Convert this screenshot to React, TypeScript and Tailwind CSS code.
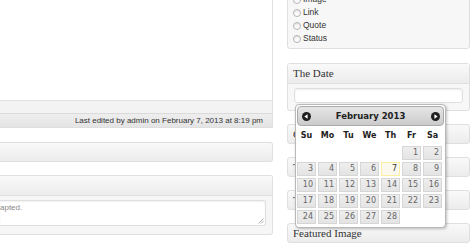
import React from "react";

const weeks: (number | null)[][] = [
  [null, null, null, null, null, 1, 2],
  [3, 4, 5, 6, 7, 8, 9],
  [10, 11, 12, 13, 14, 15, 16],
  [17, 18, 19, 20, 21, 22, 23],
  [24, 25, 26, 27, 28, null, null],
];

const dayNames = ["Su", "Mo", "Tu", "We", "Th", "Fr", "Sa"];

function CircleArrow({ dir }: { dir: "left" | "right" }) {
  return (
    <svg width="9" height="9" viewBox="0 0 9 9">
      <circle cx="4.5" cy="4.5" r="4.5" fill="#1f1f1f" />
      {dir === "left" ? (
        <polygon points="2.3,4.5 5.6,2.2 5.6,6.8" fill="#fff" />
      ) : (
        <polygon points="6.7,4.5 3.4,2.2 3.4,6.8" fill="#fff" />
      )}
    </svg>
  );
}

function Radio({ label }: { label: string }) {
  return (
    <div className="h-[13px] flex items-center gap-[2px]">
      <span className="w-[8px] h-[8px] rounded-full border border-[#b4b4b4] bg-linear-to-b from-[#f2f2f2] to-white shadow-[inset_0_1px_1px_rgba(0,0,0,0.08)]" />
      <span className="text-[8.5px] leading-none text-[#333]">{label}</span>
    </div>
  );
}

function CollapsedBox({ title }: { title: string }) {
  return (
    <div className="mt-[13px] h-[20px] border border-[#dfdfdf] rounded-[3px] bg-linear-to-b from-[#f9f9f9] to-[#ececec] flex items-center pl-[5px] font-['Liberation_Serif',Georgia,serif] text-[11px] text-[#333]">
      {title}
    </div>
  );
}

export default function App() {
  return (
    <div className="relative w-[474px] h-[248px] overflow-hidden bg-white flex font-['Liberation_Sans',Arial,sans-serif]">
      {/* left column */}
      <div className="w-[273px] shrink-0 flex flex-col">
        <div className="border-r border-b border-[#dfdfdf] flex flex-col">
          <div className="h-[100px] bg-white" />
          <div className="h-[13px] border-t border-[#e2e2e2] bg-[#f3f3f3]" />
          <div className="h-[14px] border-t border-[#dadada] bg-linear-to-b from-[#eeeeee] to-[#e4e4e4] flex items-center justify-end pr-[9px] text-[8px] leading-none text-[#333]">
            Last edited by admin on February 7, 2013 at 8:19 pm
          </div>
        </div>

        <div className="mt-[14px] h-[20px] border-y border-r border-[#dfdfdf] rounded-r-[3px] bg-linear-to-b from-[#f9f9f9] to-[#ececec]" />

        <div className="mt-[13px] border-y border-r border-[#dfdfdf] rounded-r-[3px] bg-[#f6f6f6] flex flex-col">
          <div className="h-[20px] border-b border-[#dfdfdf] bg-linear-to-b from-[#f9f9f9] to-[#ececec]" />
          <div className="pt-[4px] pb-[8px] pr-[6px]">
            <div className="relative h-[26px] border-y border-r border-[#dfdfdf] rounded-r-[3px] bg-white shadow-[inset_0_1px_2px_rgba(0,0,0,0.06)] pt-[2px] text-[8px] leading-[10px] text-[#888]">
              apted.
              <svg
                className="absolute right-[1px] bottom-[1px]"
                width="6"
                height="6"
                viewBox="0 0 6 6"
              >
                <line x1="5.5" y1="0.5" x2="0.5" y2="5.5" stroke="#9a9a9a" strokeWidth="0.8" />
                <line x1="5.5" y1="3" x2="3" y2="5.5" stroke="#9a9a9a" strokeWidth="0.8" />
              </svg>
            </div>
          </div>
        </div>
      </div>

      {/* right column */}
      <div className="ml-[14px] w-[183px] shrink-0 flex flex-col">
        <div className="-mt-[20px] border border-[#dfdfdf] rounded-[3px] bg-[#f7f7f7] pt-[12px] pb-[3px] pl-[5px]">
          <Radio label="Image" />
          <Radio label="Link" />
          <Radio label="Quote" />
          <Radio label="Status" />
        </div>

        <div className="mt-[14px] border border-[#dfdfdf] rounded-[3px] bg-[#f7f7f7] flex flex-col">
          <div className="h-[20px] border-b border-[#dfdfdf] bg-linear-to-b from-[#f9f9f9] to-[#ececec] flex items-center pl-[5px] font-['Liberation_Serif',Georgia,serif] text-[11px] text-[#333]">
            The Date
          </div>
          <div className="pt-[4px] pb-[7px] px-[6px]">
            <div className="h-[15px] border border-[#dfdfdf] rounded-[3px] bg-white shadow-[inset_0_1px_2px_rgba(0,0,0,0.07)]" />
          </div>
        </div>

        <CollapsedBox title="Categories" />
        <CollapsedBox title="Tags" />
        <CollapsedBox title="Theme Options" />
        <CollapsedBox title="Featured Image" />
      </div>

      {/* datepicker popup */}
      <div className="absolute left-[295px] top-[104px] w-[151px] border border-[#b8b8b8] rounded-[4px] bg-white px-[1px] pt-[1px] pb-[3px] shadow-[1px_1px_3px_rgba(0,0,0,0.25)] font-['DejaVu_Sans',Verdana,sans-serif]">
        <div className="h-[20px] border border-[#aaaaaa] rounded-[4px] bg-linear-to-b from-[#e6e6e6] to-[#cbcbcb] flex items-center px-[3.5px]">
          <CircleArrow dir="left" />
          <div className="flex-1 text-center text-[8.5px] font-bold leading-none text-[#222]">
            February 2013
          </div>
          <CircleArrow dir="right" />
        </div>
        <div className="grid grid-cols-[repeat(7,19px)] gap-x-[2px] h-[20px] items-center">
          {dayNames.map((d) => (
            <div key={d} className="text-center text-[8px] font-bold leading-none text-[#222]">
              {d}
            </div>
          ))}
        </div>
        <div className="grid grid-cols-[repeat(7,19px)] gap-[2px]">
          {weeks.flat().map((n, i) =>
            n === null ? (
              <div key={i} className="h-[14px]" />
            ) : n === 7 ? (
              <div
                key={i}
                className="h-[14px] border border-[#fcefa1] bg-[#fbf9ee] flex items-center justify-end pr-[2px] text-[8px] leading-none text-[#363636]"
              >
                {n}
              </div>
            ) : (
              <div
                key={i}
                className="h-[14px] border border-[#d6d6d6] bg-linear-to-b from-[#eeeeee] to-[#e4e4e4] flex items-center justify-end pr-[2px] text-[8px] leading-none text-[#666]"
              >
                {n}
              </div>
            )
          )}
        </div>
      </div>
    </div>
  );
}
